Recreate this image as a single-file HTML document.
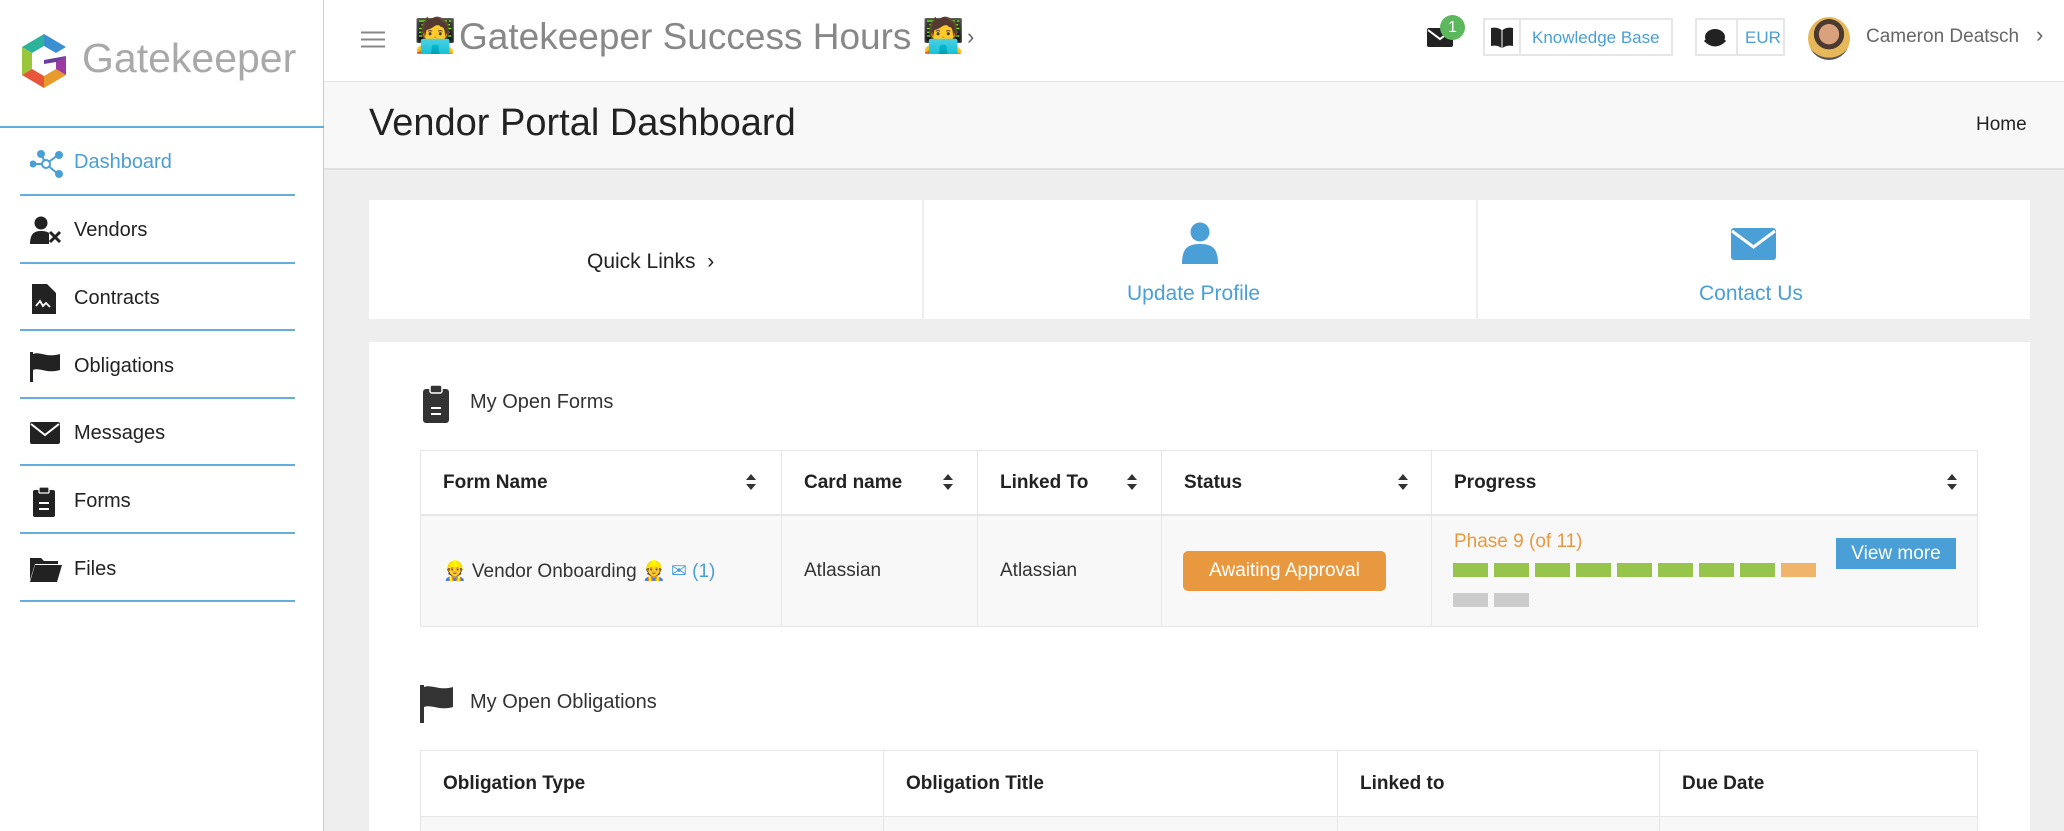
<!DOCTYPE html>
<html style="width:2064px;height:831px;overflow:hidden"><head><meta charset="utf-8"><style>
*{box-sizing:border-box;margin:0;padding:0}
body{width:2064px;height:831px;overflow:hidden;background:#eee;font-family:"Liberation Sans",sans-serif;position:relative;color:#333}
.a{position:absolute}
.side{left:0;top:0;width:324px;height:831px;background:#fff;border-right:1px solid #ccc}
.hdr{left:324px;top:0;width:1740px;height:82px;background:#fff;border-bottom:1px solid #e3e3e3}
.band{left:324px;top:82px;width:1740px;height:88px;background:#f8f8f8;border-bottom:2px solid #e0e0e0}
.sep{left:20px;width:275px;height:2px;background:#4a9fd6;opacity:.85}
.mi{left:74px;font-size:20px;color:#222}
.card{background:#fff}
th,td{font-size:19px}
.tb{border-collapse:collapse;background:#fff}
.tb td{border:1px solid #e6e6e6;padding:0 22px}
.hd{font-weight:bold;color:#222}
.bar{position:absolute;width:35px;height:14px}
</style></head><body>
<div class="a side"></div>
<svg class="a" style="left:20px;top:34px" width="48" height="54" viewBox="0 0 48 54">
<polygon points="24,0 46,13 36,19 24,12" fill="#3a8fd0"/>
<polygon points="24,0 24,12 12,19 2,13" fill="#2bb39b"/>
<polygon points="2,13 12,19 12,35 2,41" fill="#9ac63c"/>
<polygon points="2,41 12,35 24,42 24,54" fill="#e8563a"/>
<polygon points="24,54 24,42 36,35 46,41" fill="#e89a2c"/>
<polygon points="46,41 36,35 36,26 46,22" fill="#9b3aa0"/>
<polygon points="24,26 46,22 36,28 24,30" fill="#6a3ea0"/>
</svg>
<div class="a" style="left:82px;top:35px;font-size:41px;color:#a9a9a9">Gatekeeper</div>
<div class="a sep" style="left:0;width:324px;top:126px;height:2px"></div>
<svg class="a" style="left:30px;top:150px" width="36" height="28" viewBox="0 0 36 28"><g fill="#4a9fd6" stroke="#4a9fd6" stroke-width="2"><line x1="4" y1="14" x2="16" y2="14"/><line x1="16" y1="14" x2="11" y2="4"/><line x1="16" y1="14" x2="28" y2="5"/><line x1="16" y1="14" x2="28" y2="24"/><circle cx="3" cy="14" r="2.5"/><circle cx="11" cy="4" r="3"/><circle cx="29" cy="5" r="3"/><circle cx="29" cy="24" r="3"/><circle cx="16" cy="14" r="4" fill="#fff"/></g></svg>
<div class="a mi" style="top:151px;color:#4a9fd6">Dashboard</div>
<div class="a sep" style="top:194px"></div>
<svg class="a" style="left:30px;top:216px" width="32" height="28" viewBox="0 0 32 28"><circle cx="11" cy="7" r="6.5" fill="#222"/><path d="M0 28 C0 17 5 15 11 15 C15 15 18 16 19 17 L19 28Z" fill="#222"/><path d="M20 16 L30 26 M30 16 L20 26" stroke="#222" stroke-width="3"/></svg>
<div class="a mi" style="top:219px">Vendors</div>
<div class="a sep" style="top:262px"></div>
<svg class="a" style="left:32px;top:284px" width="24" height="30" viewBox="0 0 24 30"><path d="M0 0H15L24 9V30H0Z" fill="#222"/><path d="M4 22 L8 17 L11 22 L14 19 L18 23" stroke="#fff" stroke-width="1.8" fill="none"/></svg>
<div class="a mi" style="top:287px">Contracts</div>
<div class="a sep" style="top:329px"></div>
<svg class="a" style="left:30px;top:352px" width="32" height="30" viewBox="0 0 32 30"><rect x="0" y="0" width="3" height="30" fill="#222"/><path d="M3 2 C10 -1 16 6 30 2 L30 18 C16 22 10 15 3 18Z" fill="#222"/></svg>
<div class="a mi" style="top:355px">Obligations</div>
<div class="a sep" style="top:397px"></div>
<svg class="a" style="left:30px;top:422px" width="30" height="22" viewBox="0 0 30 22"><rect width="30" height="22" rx="2" fill="#222"/><path d="M1 2 L15 13 L29 2" stroke="#fff" stroke-width="2" fill="none"/></svg>
<div class="a mi" style="top:422px">Messages</div>
<div class="a sep" style="top:464px"></div>
<svg class="a" style="left:33px;top:487px" width="22" height="30" viewBox="0 0 22 30"><rect x="0" y="3" width="22" height="27" rx="2" fill="#222"/><rect x="6" y="0" width="10" height="6" rx="1" fill="#222" stroke="#fff" stroke-width="1.2"/><path d="M6 16H16M6 22H16" stroke="#fff" stroke-width="2"/></svg>
<div class="a mi" style="top:490px">Forms</div>
<div class="a sep" style="top:532px"></div>
<svg class="a" style="left:30px;top:556px" width="32" height="26" viewBox="0 0 32 26"><path d="M0 2H11L14 5H28V8H5L0 24Z" fill="#222"/><path d="M5 9H32L27 26H0Z" fill="#222"/></svg>
<div class="a mi" style="top:558px">Files</div>
<div class="a sep" style="top:600px"></div>

<div class="a hdr"></div>
<svg class="a" style="left:361px;top:31px" width="24" height="17"><path d="M0 1.5H24M0 8.5H24M0 15.5H24" stroke="#888" stroke-width="2"/></svg>
<div class="a" style="left:414px;top:16px;font-size:34px">🧑‍💻</div>
<div class="a" style="left:459px;top:16px;font-size:37px;color:#888">Gatekeeper Success Hours</div>
<div class="a" style="left:922px;top:16px;font-size:34px">🧑‍💻</div>
<div class="a" style="left:967px;top:24px;font-size:22px;color:#666">›</div>
<svg class="a" style="left:1427px;top:28px" width="28" height="20"><rect width="26" height="19" rx="2" fill="#222"/><path d="M1 2L13 11L25 2" stroke="#fff" stroke-width="2" fill="none"/></svg>
<div class="a" style="left:1440px;top:15px;width:25px;height:25px;border-radius:50%;background:#5cb85c;color:#fff;font-size:16px;text-align:center;line-height:25px">1</div>
<div class="a" style="left:1483px;top:18px;width:190px;height:38px;border:2px solid #e6e6e6"></div>
<div class="a" style="left:1519px;top:18px;width:2px;height:38px;background:#e6e6e6"></div>
<svg class="a" style="left:1491px;top:27px" width="22" height="21"><path d="M0 1C4 0 8 1 10.5 3V21C8 19 4 18 0 19Z M11.5 3C14 1 18 0 22 1V19C18 18 14 19 11.5 21Z" fill="#222"/></svg>
<div class="a" style="left:1532px;top:28px;font-size:17px;color:#4a9fd6">Knowledge Base</div>
<div class="a" style="left:1695px;top:18px;width:90px;height:38px;border:2px solid #e6e6e6"></div>
<div class="a" style="left:1736px;top:18px;width:2px;height:38px;background:#e6e6e6"></div>
<svg class="a" style="left:1704px;top:28px" width="22" height="20"><ellipse cx="11" cy="9" rx="10" ry="8" fill="#222"/><path d="M1 12 Q11 22 21 12" stroke="#222" stroke-width="3" fill="none"/></svg>
<div class="a" style="left:1745px;top:28px;font-size:17px;color:#4a9fd6">EUR</div>
<div class="a" style="left:1808px;top:17px;width:42px;height:43px;border-radius:50%;background:radial-gradient(circle at 50% 40%,#d9a27d 0 30%,#4a3a30 31% 45%,#e6b85a 46% 70%,#555 71%)"></div>
<div class="a" style="left:1866px;top:26px;font-size:19px;color:#666">Cameron Deatsch</div>
<div class="a" style="left:2036px;top:22px;font-size:22px;color:#666">›</div>

<div class="a band"></div>
<div class="a" style="left:369px;top:102px;font-size:38px;color:#222">Vendor Portal Dashboard</div>
<div class="a" style="left:1976px;top:114px;font-size:19px;color:#222">Home</div>

<div class="a card" style="left:369px;top:200px;width:1661px;height:119px"></div>
<div class="a" style="left:922px;top:200px;width:2px;height:119px;background:#eee"></div>
<div class="a" style="left:1476px;top:200px;width:2px;height:119px;background:#eee"></div>
<div class="a" style="left:587px;top:250px;font-size:21px;color:#222">Quick Links &nbsp;›</div>
<svg class="a" style="left:1180px;top:222px" width="40" height="42"><circle cx="20" cy="10" r="9.5" fill="#4a9fd6"/><path d="M2 42 C2 26 8 22 20 22 C32 22 38 26 38 42Z" fill="#4a9fd6"/></svg>
<div class="a" style="left:1127px;top:282px;font-size:21px;color:#4a9fd6">Update Profile</div>
<svg class="a" style="left:1731px;top:228px" width="45" height="32"><rect width="45" height="32" rx="3" fill="#4a9fd6"/><path d="M1 3L22.5 19L44 3" stroke="#fff" stroke-width="3" fill="none"/></svg>
<div class="a" style="left:1699px;top:282px;font-size:21px;color:#4a9fd6">Contact Us</div>

<div class="a card" style="left:369px;top:342px;width:1661px;height:489px"></div>
<svg class="a" style="left:423px;top:385px" width="26" height="38"><rect x="0" y="4" width="26" height="34" rx="3" fill="#333"/><rect x="7" y="0" width="12" height="8" rx="2" fill="#333" stroke="#fff" stroke-width="1.5"/><path d="M8 23H18M8 29H18" stroke="#fff" stroke-width="2"/></svg>
<div class="a" style="left:470px;top:391px;font-size:20px;color:#333">My Open Forms</div>

<table class="a tb" style="left:420px;top:450px;width:1558px;height:177px">
<tr style="height:65px;background:#fff"><td class="hd" style="width:361px">Form Name</td><td class="hd" style="width:196px">Card name</td><td class="hd" style="width:184px">Linked To</td><td class="hd" style="width:270px">Status</td><td class="hd">Progress</td></tr>
<tr style="background:#f8f8f8"><td style="color:#333">👷 Vendor Onboarding 👷 <span style="color:#4a9fd6">✉ (1)</span></td><td>Atlassian</td><td>Atlassian</td><td></td><td></td></tr>
</table>
<div class="a" style="left:420px;top:514px;width:1558px;height:2px;background:#e6e6e6"></div>
<svg class="a" style="left:745px;top:474px" width="12" height="16"><path d="M6 0L11 6H1ZM6 16L11 10H1Z" fill="#333"/></svg>
<svg class="a" style="left:942px;top:474px" width="12" height="16"><path d="M6 0L11 6H1ZM6 16L11 10H1Z" fill="#333"/></svg>
<svg class="a" style="left:1126px;top:474px" width="12" height="16"><path d="M6 0L11 6H1ZM6 16L11 10H1Z" fill="#333"/></svg>
<svg class="a" style="left:1397px;top:474px" width="12" height="16"><path d="M6 0L11 6H1ZM6 16L11 10H1Z" fill="#333"/></svg>
<svg class="a" style="left:1946px;top:474px" width="12" height="16"><path d="M6 0L11 6H1ZM6 16L11 10H1Z" fill="#333"/></svg>
<div class="a" style="left:1183px;top:551px;width:203px;height:40px;border-radius:5px;background:#e8993f;color:#fff;font-size:19px;text-align:center;line-height:40px">Awaiting Approval</div>
<div class="a" style="left:1454px;top:531px;font-size:19px;color:#e8993f">Phase 9 (of 11)</div>
<div class="bar" style="left:1453px;top:563px;background:#97c44a"></div>
<div class="bar" style="left:1494px;top:563px;background:#97c44a"></div>
<div class="bar" style="left:1535px;top:563px;background:#97c44a"></div>
<div class="bar" style="left:1576px;top:563px;background:#97c44a"></div>
<div class="bar" style="left:1617px;top:563px;background:#97c44a"></div>
<div class="bar" style="left:1658px;top:563px;background:#97c44a"></div>
<div class="bar" style="left:1699px;top:563px;background:#97c44a"></div>
<div class="bar" style="left:1740px;top:563px;background:#97c44a"></div>
<div class="bar" style="left:1781px;top:563px;background:#f0b46a"></div>
<div class="bar" style="left:1453px;top:593px;background:#ccc"></div>
<div class="bar" style="left:1494px;top:593px;background:#ccc"></div>
<div class="a" style="left:1836px;top:538px;width:120px;height:31px;background:#4a9fd6;color:#fff;font-size:19px;text-align:center;line-height:31px">View more</div>

<svg class="a" style="left:420px;top:685px" width="34" height="38"><rect x="0" y="0" width="4" height="38" fill="#333"/><path d="M4 2 C12 -1 19 6 33 2 L33 22 C19 26 12 19 4 22Z" fill="#333"/></svg>
<div class="a" style="left:470px;top:691px;font-size:20px;color:#333">My Open Obligations</div>
<table class="a tb" style="left:420px;top:750px;width:1558px;height:90px">
<tr style="height:66px"><td class="hd" style="width:463px">Obligation Type</td><td class="hd" style="width:454px">Obligation Title</td><td class="hd" style="width:322px">Linked to</td><td class="hd">Due Date</td></tr>
<tr style="background:#f8f8f8"><td></td><td></td><td></td><td></td></tr>
</table>
</body></html>
